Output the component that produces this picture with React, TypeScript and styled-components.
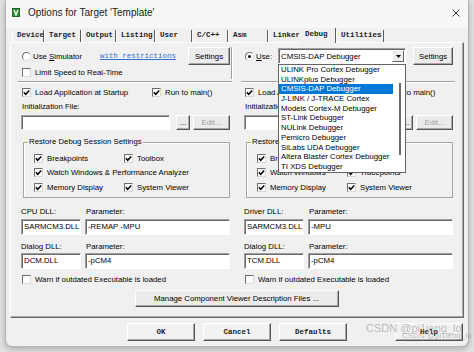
import React from "react";
import styled, { createGlobalStyle } from "styled-components";

const SANS = `"Liberation Sans", Arial, sans-serif`;
const MONO = `"Liberation Mono", "Courier New", monospace`;

const tabs = [
  { name: "Device", w: 32 },
  { name: "Target", w: 37 },
  { name: "Output", w: 35 },
  { name: "Listing", w: 39 },
  { name: "User", w: 37 },
  { name: "C/C++", w: 36 },
  { name: "Asm", w: 40 },
  { name: "Linker", w: 32 },
  { name: "Debug", w: 37 },
  { name: "Utilities", w: 48 },
];

const debuggers = [
  "ULINK Pro Cortex Debugger",
  "ULINKplus Debugger",
  "CMSIS-DAP Debugger",
  "J-LINK / J-TRACE Cortex",
  "Models Cortex-M Debugger",
  "ST-Link Debugger",
  "NULink Debugger",
  "Pemicro Debugger",
  "SiLabs UDA Debugger",
  "Altera Blaster Cortex Debugger",
  "TI XDS Debugger",
];

function Check({ on = true, children }: { on?: boolean; children: React.ReactNode }) {
  return (
    <CheckItem>
      <Box>
        {on && (
          <svg width="7" height="7" viewBox="0 0 7 7">
            <polyline points="0.8,3.3 2.7,5.3 6.2,1.4" fill="none" stroke="#000" strokeWidth="1.5" />
          </svg>
        )}
      </Box>
      <span>{children}</span>
    </CheckItem>
  );
}

function DebuggerCombo() {
  return (
    <Combo>
      <span>CMSIS-DAP Debugger</span>
      <ArrowBtn>
        <svg width="5" height="3" viewBox="0 0 5 3">
          <polygon points="0,0 5,0 2.5,3" fill="#000" />
        </svg>
      </ArrowBtn>
      <DropList>
        <Items>
          {debuggers.map((d) => (
            <Item key={d} $sel={d === "CMSIS-DAP Debugger"}>{d}</Item>
          ))}
        </Items>
        <Track>
          <Thumb />
        </Track>
      </DropList>
    </Combo>
  );
}

function Column({ side }: { side: "left" | "right" }) {
  const left = side === "left";
  return (
    <Col>
      <TopSection $divider={left}>
        <TopRow>
          <Radio $on={!left} />
          {left ? (
            <>
              <RadioText>Use <u>S</u>imulator</RadioText>
              <Link>with restrictions</Link>
              <Btn $w={42} $ml="auto">Settings</Btn>
            </>
          ) : (
            <>
              <RadioText><u>U</u>se:</RadioText>
              <DebuggerCombo />
              <Btn $w={40} $ml="7px">Settings</Btn>
            </>
          )}
        </TopRow>
        <Row>{left && <Check on={false}>Limit Speed to Real-Time</Check>}</Row>
      </TopSection>
      <Separator />
      <LoadRow>
        <Check>Load Application at Startup</Check>
        <Check>Run to main()</Check>
      </LoadRow>
      <Caption>Initialization File:</Caption>
      <FileRow>
        <Field $w={149} />
        <Btn $w={14} $h={15} $ml="6px">...</Btn>
        <Btn $w={37} $h={15} $ml="3px" disabled>Edit...</Btn>
      </FileRow>
      <Group>
        <Legend>Restore Debug Session Settings</Legend>
        <GroupGrid>
          <Check>Breakpoints</Check>
          <Check>Toolbox</Check>
          {left ? (
            <Wide><Check>Watch Windows &amp; Performance Analyzer</Check></Wide>
          ) : (
            <>
              <Check>Watch Windows</Check>
              <Check>Tracepoints</Check>
            </>
          )}
          <Check>Memory Display</Check>
          <Check>System Viewer</Check>
        </GroupGrid>
      </Group>
      <DllCaptions $first>
        <span>{left ? "CPU DLL:" : "Driver DLL:"}</span>
        <span>Parameter:</span>
      </DllCaptions>
      <DllFields>
        <Field $w={60}>SARMCM3.DLL</Field>
        <Field $w={145}>{left ? "-REMAP -MPU" : "-MPU"}</Field>
      </DllFields>
      <DllCaptions>
        <span>Dialog DLL:</span>
        <span>Parameter:</span>
      </DllCaptions>
      <DllFields $flat>
        <Field $w={60}>{left ? "DCM.DLL" : "TCM.DLL"}</Field>
        <Field $w={145}>-pCM4</Field>
      </DllFields>
      <WarnRow>
        <Check on={false}>Warn if outdated Executable is loaded</Check>
      </WarnRow>
    </Col>
  );
}

export default function App() {
  return (
    <>
      <GlobalStyle />
      <Window>
        <TitleBar>
          <svg width="8" height="9" viewBox="0 0 8 9">
            <rect x="0" y="0" width="8" height="9" fill="#2f8f3b" />
            <rect x="0.5" y="0.5" width="7" height="8" fill="none" stroke="#1d6a28" />
            <polyline points="2,2 4,7 6,2" fill="none" stroke="#fff" strokeWidth="1.3" />
          </svg>
          <Title>Options for Target 'Template'</Title>
          <Close>
            <svg width="8" height="8" viewBox="0 0 8 8">
              <path d="M0.5 0.5 L7.5 7.5 M7.5 0.5 L0.5 7.5" stroke="#333" strokeWidth="1" />
            </svg>
          </Close>
        </TitleBar>
        <Body>
          <TabStrip>
            {tabs.map((t) => (
              <Tab key={t.name} $w={t.w} $active={t.name === "Debug"}>{t.name}</Tab>
            ))}
          </TabStrip>
          <Panel>
            <Columns>
              <Column side="left" />
              <Column side="right" />
            </Columns>
            <ManageRow>
              <Btn $w={204} $h={17}>Manage Component Viewer Description Files ...</Btn>
            </ManageRow>
          </Panel>
          <ButtonBar>
            <BarBtn>OK</BarBtn>
            <BarBtn>Cancel</BarBtn>
            <BarBtn>Defaults</BarBtn>
            <BarBtn $gap>Help</BarBtn>
          </ButtonBar>
        </Body>
        <Watermark>CSDN @pi1ieng_lo</Watermark>
        <WatermarkSmall>CSDN @pi1ieng_lo</WatermarkSmall>
      </Window>
    </>
  );
}

const GlobalStyle = createGlobalStyle`
  html, body {
    margin: 0;
    padding: 0;
  }
  body {
    width: 474px;
    height: 352px;
    overflow: hidden;
    background: #e2e2e2;
    font-family: ${SANS};
    font-size: 7.8px;
    color: #000;
  }
`;

const Window = styled.div`
  position: relative;
  box-sizing: border-box;
  width: 464px;
  margin-left: 5px;
  padding-bottom: 5px;
  background: #f0f0f0;
  border: 1px solid #b4b4b4;
  border-top: none;
  border-radius: 0 0 7px 7px;
  box-shadow: 0 2px 6px rgba(0, 0, 0, 0.25);
`;

const TitleBar = styled.div`
  display: flex;
  align-items: center;
  height: 28px;
  padding: 0 8px 3px 6px;
  box-sizing: border-box;
  background: #f7f7f7;
`;

const Title = styled.span`
  margin-left: 8px;
  font-family: ${SANS};
  font-size: 10px;
  color: #1b1b1b;
`;

const Close = styled.span`
  display: flex;
  margin-left: auto;
`;

const Body = styled.div`
  padding: 0 4px;
`;

const TabStrip = styled.div`
  position: relative;
  z-index: 1;
  display: flex;
  align-items: flex-end;
  height: 14px;
  padding-left: 2px;
`;

const Tab = styled.div<{ $w: number; $active?: boolean }>`
  box-sizing: border-box;
  width: ${(p) => p.$w}px;
  height: ${(p) => (p.$active ? 15 : 12)}px;
  margin-bottom: ${(p) => (p.$active ? -1 : 0)}px;
  margin-left: ${(p) => (p.$active ? -1 : 0)}px;
  padding-left: ${(p) => (p.$active ? 5 : 4)}px;
  background: #f0f0f0;
  border-right: 1px solid #5c5c5c;
  border-left: ${(p) => (p.$active ? "1px solid #f0f0f0" : "1px solid #fff")};
  font-family: ${MONO};
  font-weight: 700;
  font-size: 7.5px;
  line-height: ${(p) => (p.$active ? 13 : 11)}px;
  color: #222;
  white-space: nowrap;
`;

const Panel = styled.div`
  box-sizing: border-box;
  padding: 4px 8px 10px 7px;
  border: 1px solid;
  border-color: #fdfdfd #6a6a6a #6a6a6a #fdfdfd;
  box-shadow: inset -1px -1px #a8a8a8;
`;

const Columns = styled.div`
  display: flex;
  gap: 9px;
`;

const Col = styled.div`
  width: 214px;
  display: flex;
  flex-direction: column;
`;

const TopSection = styled.div<{ $divider?: boolean }>`
  box-sizing: border-box;
  width: 214px;
  border-right: ${(p) => (p.$divider ? "1px solid #a0a0a0" : "none")};
  box-shadow: ${(p) => (p.$divider ? "1px 0 #fff" : "none")};
  padding-right: 1px;
`;

const Row = styled.div`
  display: flex;
  align-items: center;
  height: 14px;
  padding-left: 4px;
`;

const TopRow = styled(Row)`
  height: 18px;
`;

const LoadRow = styled(Row)`
  display: grid;
  grid-template-columns: 130px auto;
  margin-top: 2px;
`;

const Caption = styled(Row)``;

const FileRow = styled.div`
  display: flex;
  height: 15px;
  margin-top: 2px;
  padding-left: 3px;
`;

const WarnRow = styled(Row)`
  margin-top: 4px;
`;

const Separator = styled.div`
  margin-top: 2px;
  border-top: 1px solid #a0a0a0;
  border-bottom: 1px solid #fff;
`;

const CheckItem = styled.label`
  display: flex;
  align-items: center;
  gap: 4px;
  white-space: nowrap;
`;

const Box = styled.span`
  box-sizing: border-box;
  display: flex;
  width: 9px;
  height: 9px;
  background: #fff;
  border: 1px solid;
  border-color: #6e6e6e #d8d8d8 #d8d8d8 #6e6e6e;
`;

const Radio = styled.span<{ $on?: boolean }>`
  box-sizing: border-box;
  display: flex;
  align-items: center;
  justify-content: center;
  width: 9px;
  height: 9px;
  border-radius: 50%;
  background: #fff;
  border: 1px solid;
  border-color: #6e6e6e #dcdcdc #dcdcdc #6e6e6e;
  &::after {
    content: "";
    display: ${(p) => (p.$on ? "block" : "none")};
    width: 3px;
    height: 3px;
    border-radius: 50%;
    background: #000;
  }
`;

const RadioText = styled.span`
  margin-left: 2px;
  white-space: nowrap;
`;

const Link = styled.span`
  margin-left: 18px;
  font-family: ${MONO};
  font-size: 7.45px;
  color: #2f6fd0;
  text-decoration: underline;
  white-space: nowrap;
`;

const Btn = styled.button<{ $w: number; $h?: number; $ml?: string }>`
  box-sizing: border-box;
  width: ${(p) => p.$w}px;
  height: ${(p) => p.$h ?? 18}px;
  margin-left: ${(p) => p.$ml ?? "0"};
  padding: 0;
  flex-shrink: 0;
  background: #ebebeb;
  border: 1px solid;
  border-color: #fff #555 #555 #fff;
  box-shadow: inset -1px -1px #a8a8a8;
  font-family: ${SANS};
  font-size: 7.8px;
  color: #000;
  white-space: nowrap;
  &:disabled {
    color: #a0a0a0;
  }
`;

const Field = styled.div<{ $w: number }>`
  box-sizing: border-box;
  display: flex;
  align-items: center;
  width: ${(p) => p.$w}px;
  padding-left: 2px;
  background: #fff;
  border: 1px solid;
  border-color: #a0a0a0 #fff #fff #a0a0a0;
  box-shadow: inset 1px 1px #6a6a6a;
  white-space: nowrap;
`;

const Group = styled.fieldset`
  margin: 7px 2px 0 5px;
  padding: 4px 0 2px 4px;
  min-width: 0;
  border: 1px solid #a4a4a4;
  box-shadow: inset 1px 1px #fff;
`;

const Legend = styled.legend`
  padding: 0 1px;
  line-height: 10px;
  height: 10px;
  white-space: nowrap;
`;

const GroupGrid = styled.div`
  display: grid;
  grid-template-columns: 90px auto;
  grid-auto-rows: 14.5px;
  align-items: center;
  padding-left: 6px;
`;

const Wide = styled.div`
  grid-column: 1 / span 2;
`;

const DllCaptions = styled.div<{ $first?: boolean }>`
  display: grid;
  grid-template-columns: 65px auto;
  align-items: center;
  height: 12px;
  margin-top: ${(p) => (p.$first ? 8 : 6)}px;
  padding-left: 3px;
`;

const DllFields = styled.div<{ $flat?: boolean }>`
  display: flex;
  gap: 4px;
  height: 16px;
  margin-top: ${(p) => (p.$flat ? 0 : 1)}px;
  padding-left: 3px;
`;

const Combo = styled.div`
  position: relative;
  box-sizing: border-box;
  display: flex;
  align-items: center;
  width: 128px;
  height: 16px;
  margin-left: 6px;
  padding-left: 2px;
  background: #fff;
  border: 1px solid;
  border-color: #a0a0a0 #fff #fff #a0a0a0;
  box-shadow: inset 1px 1px #6a6a6a;
  white-space: nowrap;
`;

const ArrowBtn = styled.span`
  box-sizing: border-box;
  display: flex;
  align-items: center;
  justify-content: center;
  width: 12px;
  height: 12px;
  margin-left: auto;
  margin-right: 1px;
  background: #ececec;
  border: 1px solid;
  border-color: #fff #666 #666 #fff;
`;

const DropList = styled.div`
  position: absolute;
  z-index: 10;
  top: 15px;
  left: -1px;
  box-sizing: border-box;
  display: flex;
  width: 128px;
  height: 109px;
  background: #fff;
  border: 1px solid #646464;
`;

const Items = styled.div`
  flex: 1;
`;

const Item = styled.div<{ $sel?: boolean }>`
  height: 9.7px;
  line-height: 9.7px;
  padding-left: 2px;
  background: ${(p) => (p.$sel ? "#0078d7" : "transparent")};
  color: ${(p) => (p.$sel ? "#fff" : "#000")};
  white-space: nowrap;
`;

const Track = styled.div`
  display: flex;
  justify-content: center;
  width: 12px;
  padding-top: 18px;
  padding-left: 2px;
  box-sizing: border-box;
`;

const Thumb = styled.div`
  width: 2px;
  height: 72px;
  background: #6a6a6a;
`;

const ManageRow = styled.div`
  display: flex;
  justify-content: center;
  margin-top: 3px;
`;

const ButtonBar = styled.div`
  display: flex;
  justify-content: flex-end;
  gap: 8px;
  margin-top: 5px;
  padding-right: 1px;
`;

const BarBtn = styled.button<{ $gap?: boolean }>`
  box-sizing: border-box;
  width: 68px;
  height: 18px;
  margin-left: ${(p) => (p.$gap ? 40 : 0)}px;
  padding: 0;
  background: #f2f2f2;
  border: 1px solid;
  border-color: #fff #555 #555 #fff;
  box-shadow: inset -1px -1px #a8a8a8;
  font-family: ${MONO};
  font-weight: 700;
  font-size: 7.5px;
  color: #222;
`;

const Watermark = styled.span`
  position: absolute;
  left: 360px;
  top: 322px;
  font-family: ${SANS};
  font-size: 11px;
  color: rgba(140, 140, 140, 0.55);
  white-space: nowrap;
  pointer-events: none;
`;

const WatermarkSmall = styled.span`
  position: absolute;
  left: 396px;
  top: 331px;
  font-family: ${SANS};
  font-size: 8px;
  color: rgba(110, 110, 110, 0.45);
  white-space: nowrap;
  pointer-events: none;
`;
